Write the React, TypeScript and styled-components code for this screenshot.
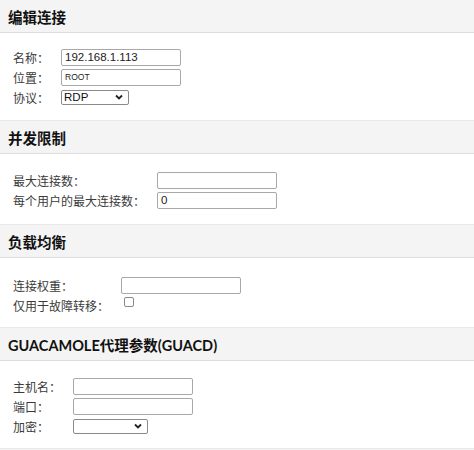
import React from "react";
import styled, { createGlobalStyle } from "styled-components";

const GlobalStyle = createGlobalStyle`
  body {
    margin: 0;
    background: #fff;
    font-family: "Liberation Sans", Arial, "Noto Sans CJK SC", sans-serif;
  }
`;

const Page = styled.div`
  display: flex;
  flex-direction: column;
  height: 450px;
  overflow: hidden;
`;

const Header = styled.div<{ $first?: boolean }>`
  flex-shrink: 0;
  height: ${(p) => (p.$first ? 33 : 34)}px;
  box-sizing: border-box;
  display: flex;
  align-items: center;
  padding: 0 8px;
  background: #f4f4f4;
  border-top: ${(p) => (p.$first ? "none" : "1px solid #e8e8e8")};
  border-bottom: 1px solid #dcdcdc;
`;

const Title = styled.h2`
  margin: 0;
  font-family: Lato, "Noto Sans CJK SC", sans-serif;
  font-size: 14.5px;
  font-weight: 700;
  color: #111;
`;

const Fields = styled.div<{ $top: number; $bottom: number }>`
  flex-shrink: 0;
  display: grid;
  grid-template-columns: max-content max-content;
  grid-auto-rows: 20px;
  column-gap: 11px;
  align-items: center;
  padding: ${(p) => p.$top}px 13px ${(p) => p.$bottom}px;
`;

const Label = styled.label`
  font-size: 12px;
  color: #3a3a3a;
  font-family: "Liberation Sans", Arial, "Noto Sans CJK SC", sans-serif;
`;

const TextInput = styled.input<{ $small?: boolean }>`
  box-sizing: border-box;
  width: 120px;
  height: 17px;
  margin: 0 0 0 1px;
  padding: 0 3px;
  border: 1px solid #a8a8a8;
  border-radius: 2px;
  background: #fff;
  color: #222;
  font-family: "Liberation Sans", Arial, sans-serif;
  font-size: ${(p) => (p.$small ? "8.5px" : "11.5px")};
  outline: none;
`;

const Select = styled.select<{ $width: number }>`
  box-sizing: border-box;
  width: ${(p) => p.$width}px;
  height: 15px;
  margin: 0 0 0 1px;
  padding: 0 0 0 2px;
  border: 1px solid #8a8a8a;
  border-radius: 2px;
  background: #fff;
  color: #111;
  font-family: "Liberation Sans", Arial, sans-serif;
  font-size: 11.5px;
  line-height: 13px;
  appearance: none;
  background-image: url("data:image/svg+xml;utf8,<svg xmlns='http://www.w3.org/2000/svg' width='8' height='6' viewBox='0 0 8 6'><path d='M1 1.5 L4 4.5 L7 1.5' fill='none' stroke='%23222' stroke-width='1.8'/></svg>");
  background-repeat: no-repeat;
  background-position: right 5px center;
`;

const Check = styled.input`
  appearance: none;
  box-sizing: border-box;
  width: 10px;
  height: 10px;
  margin: 2px 0 0 4px;
  border: 1px solid #8a8a8a;
  border-radius: 2px;
  background: #fff;
  align-self: start;
`;

const App: React.FC = () => (
  <Page>
    <GlobalStyle />
    <Header $first>
      <Title>编辑连接</Title>
    </Header>
    <Fields $top={14} $bottom={13}>
      <Label>名称：</Label>
      <TextInput defaultValue="192.168.1.113" />
      <Label>位置：</Label>
      <TextInput $small defaultValue="ROOT" />
      <Label>协议：</Label>
      <Select $width={68} defaultValue="RDP">
        <option>RDP</option>
        <option>VNC</option>
        <option>SSH</option>
      </Select>
    </Fields>

    <Header>
      <Title>并发限制</Title>
    </Header>
    <Fields $top={16} $bottom={14}>
      <Label>最大连接数：</Label>
      <TextInput />
      <Label>每个用户的最大连接数：</Label>
      <TextInput defaultValue="0" />
    </Fields>

    <Header>
      <Title>负载均衡</Title>
    </Header>
    <Fields $top={17} $bottom={12}>
      <Label>连接权重：</Label>
      <TextInput />
      <Label>仅用于故障转移：</Label>
      <Check type="checkbox" />
    </Fields>

    <Header>
      <Title>GUACAMOLE代理参数(GUACD)</Title>
    </Header>
    <Fields $top={15} $bottom={12}>
      <Label>主机名：</Label>
      <TextInput />
      <Label>端口：</Label>
      <TextInput />
      <Label>加密：</Label>
      <Select $width={75} defaultValue="">
        <option value=""></option>
        <option value="none">无 (未加密)</option>
      </Select>
    </Fields>

    <Header />
  </Page>
);

export default App;
